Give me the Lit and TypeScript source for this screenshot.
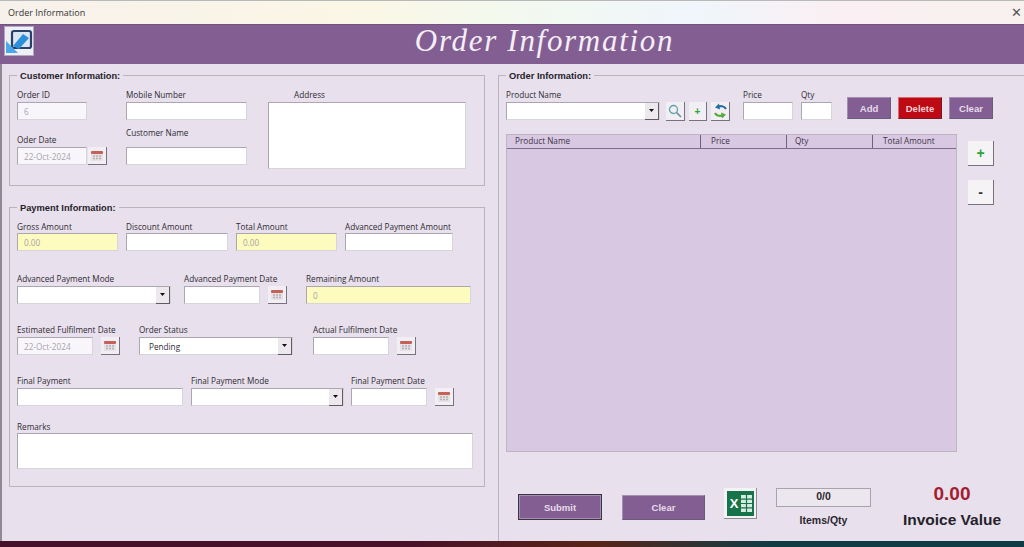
import { LitElement, html, css, svg } from 'lit';
import { customElement } from 'lit/decorators.js';

const calIcon = svg`<svg width="14" height="13" viewBox="0 0 14 13">
  <rect x="1" y="2" width="12" height="10" fill="#e6e1e4"/>
  <rect x="1" y="2" width="12" height="3" rx="1" fill="#c8605a"/>
  <path d="M3 7h2M6 7h2M9 7h2M3 9.500h2M6 9.500h2M9 9.500h2" stroke="#b4b0b3" stroke-width="1.300"/>
</svg>`;

const arrowIcon = svg`<svg width="5" height="3" viewBox="0 0 5 3"><path d="M0 0h5L2.500 3z" fill="#111"/></svg>`;

const searchIcon = svg`<svg width="14" height="14" viewBox="0 0 14 14" fill="none">
  <circle cx="5.500" cy="5.500" r="4" stroke="#5ea3ad" stroke-width="1.300"/>
  <path d="M8.600 8.600L13 13" stroke="#6f8f9a" stroke-width="1.600"/>
</svg>`;

const refreshIcon = svg`<svg width="15" height="16" viewBox="0 0 15 16" fill="none">
  <path d="M13 6C11.500 2.800 7 2.400 4.500 4.200" stroke="#2a6f9c" stroke-width="2.200"/>
  <path d="M6 0.500L2 4.500l5 2z" fill="#2a6f9c"/>
  <path d="M2 10c1.500 3.200 6 3.600 8.500 1.800" stroke="#5aa83c" stroke-width="2.200"/>
  <path d="M9 15.500l4-4-5-2z" fill="#5aa83c"/>
</svg>`;

const excelIcon = svg`<svg width="29" height="27" viewBox="0 0 29 27">
  <rect x="1" y="1" width="27" height="25" fill="#17744a"/>
  <rect x="15" y="5" width="11" height="17" fill="#d6ece0"/>
  <path d="M15 9.200h11M15 13.500h11M15 17.800h11M20.500 5v17" stroke="#17744a" stroke-width="1.200"/>
  <text x="8" y="18" text-anchor="middle" font-family="Liberation Sans" font-weight="700" font-size="13" fill="#fff">X</text>
</svg>`;

const logoIcon = svg`<svg width="28" height="26" viewBox="0 0 28 26" fill="none">
  <rect x="7" y="3" width="19" height="17" rx="2" fill="#d9e6f2" stroke="#2b3f6b" stroke-width="2.200"/>
  <path d="M8 18L18 6l6 4-10 11z" fill="#2c8fd9"/>
  <path d="M1 25V13l12 12z" fill="#4aa9ea"/>
</svg>`;

@customElement('app-root')
class AppRoot extends LitElement {
  static styles = css`
    :host {
      display: block;
      width: 1024px;
      height: 547px;
      overflow: hidden;
      font-family: "Open Sans", "Liberation Sans", sans-serif;
      font-size: 8.200px;
      color: #2f2b33;
    }
    .app {
      display: flex;
      flex-direction: column;
      height: 547px;
    }
    .titlebar {
      flex: 0 0 24px;
      box-sizing: border-box;
      display: flex;
      align-items: center;
      justify-content: space-between;
      padding: 0 2px 0 8px;
      font-size: 9px;
      color: #333;
      border-top: 1px solid #b9b9b9;
      background: linear-gradient(90deg, #f7f1ec 0%, #fbf7e6 35%, #f3f9ef 50%, #f0f6fb 68%, #faeff3 82%, #f8f1ee 100%);
    }
    .close { font-size: 13px; color: #555; line-height: 1; }
    .header {
      flex: 0 0 40px;
      box-sizing: border-box;
      position: relative;
      display: flex;
      justify-content: center;
      align-items: center;
      padding: 0 0 7px 65px;
      background: #835e93;
      border-top: 1px solid #74527f;
    }
    .title {
      font-family: "Liberation Serif", serif;
      font-style: italic;
      font-size: 31px;
      line-height: 32px;
      letter-spacing: 1.700px;
      color: #f4eff6;
    }
    .logo {
      position: absolute;
      left: 4px;
      top: 1px;
      width: 28px;
      height: 28px;
      display: flex;
      align-items: center;
      justify-content: center;
      background: #eef0f5;
      border: 1px solid #b3a7c0;
    }
    .body {
      flex: 1;
      min-height: 0;
      display: flex;
      overflow: hidden;
      background: #e8e0ec;
      border-left: 2px solid #8f8b94;
    }
    .strip {
      flex: 0 0 6px;
      background: linear-gradient(90deg, #45102a 0%, #4a1028 40%, #5a2418 58%, #123c44 75%, #0f3b46 100%);
    }
    .left {
      flex: 0 0 476px;
      margin-left: 7px;
      display: flex;
      flex-direction: column;
      gap: 15px;
      padding-top: 5px;
    }
    .right {
      flex: 0 0 535px;
      margin-left: 13px;
      padding-top: 5px;
    }
    fieldset {
      margin: 0;
      padding: 0 11px 0 7px;
      min-width: 0;
      border: 1px solid #b9b5bd;
    }
    legend {
      margin-left: 0;
      padding: 0 3px;
      height: 12px;
      font-family: "Liberation Sans", sans-serif;
      font-size: 9.300px;
      font-weight: 700;
      line-height: 14px;
      color: #26222a;
    }
    .field { display: flex; flex-direction: column; min-width: 0; }
    .field label {
      line-height: 12px;
      margin-bottom: 1px;
      white-space: nowrap;
    }
    .field.loose label { margin-bottom: 8px; }
    .field.addr label { padding-left: 26px; }
    .r1 label, .r5 label { line-height: 14px; margin-bottom: -1px; }
    .r2 label, .r3 label { line-height: 11px; margin-bottom: 2px; }
    .input {
      box-sizing: border-box;
      display: block;
      width: 100%;
      height: 18px;
      padding: 0 6px;
      font: inherit;
      color: #a8a4ac;
      background: #fff;
      border: 1px solid;
      border-color: #aaa7ae #d8d5da #d8d5da #aaa7ae;
      border-radius: 0;
      outline: none;
      resize: none;
    }
    .input.off { background: #f8f6fa; }
    .input.due { background: #fdfbbd; }
    .combo {
      box-sizing: border-box;
      display: flex;
      align-items: center;
      justify-content: space-between;
      height: 18px;
      padding-left: 9px;
      background: #fff;
      border: 1px solid;
      border-color: #aaa7ae #d8d5da #d8d5da #aaa7ae;
    }
    .combo i {
      width: 13px;
      height: 16px;
      display: flex;
      align-items: center;
      justify-content: center;
      background: #ece8ee;
      border-right: 1px solid #5f5b63;
      border-bottom: 1px solid #5f5b63;
    }
    .tool {
      box-sizing: border-box;
      display: flex;
      align-items: center;
      justify-content: center;
      padding: 0;
      background: #f2eff4;
      border: 0;
      border-right: 1px solid #77737c;
      border-bottom: 1px solid #77737c;
      color: #2ca53a;
      font: 700 10px "Liberation Sans", sans-serif;
    }
    .cal { width: 19px; height: 18px; }
    .with-cal { display: flex; gap: 8px; align-items: flex-end; }
    .with-cal .input { flex: 0 0 76px; width: 76px; }
    .cust {
      display: grid;
      grid-template-columns: 109px 142px 198px;
      padding: 8px 0 16px;
    }
    .stack { display: flex; flex-direction: column; }
    .gap14 { margin-top: 14px; }
    .gap7 { margin-top: 7px; }
    .w121 { width: 121px; }
    .order-id { width: 70px; }
    .with-cal.tight { gap: 1px; }
    .with-cal.tight .input { flex: 0 0 70px; width: 70px; }
    .address { height: 67px; }
    .pay { padding: 7px 0 17px; }
    .row { display: grid; justify-content: start; }
    .r1 { grid-template-columns: 101px 102px 101px 108px; column-gap: 8px; }
    .r2 { grid-template-columns: 154px 103px 171px; column-gap: 13px; margin-top: 22px; }
    .r2 > :nth-child(3) { margin-left: 6px; }
    .r3 { grid-template-columns: 103px 154px 105px; column-gap: 19px; margin-top: 20px; }
    .r3 > :nth-child(3) { padding-left: 2px; margin-left: -1px; }
    .r4 { grid-template-columns: 166px 153px 103px; column-gap: 8px; margin-top: 20px; }
    .r4 > :nth-child(3) { margin-left: -1px; }
    .r5 { margin-top: 14px; }
    .remarks { height: 36px; }
    .order { height: 480px; padding: 8px 0 0; }
    .top { display: flex; align-items: flex-start; }
    .product { width: 154px; }
    .tools { display: flex; gap: 4px; margin: 13px 13px 0 6px; }
    .tools .tool { height: 19px; }
    .btn {
      box-sizing: border-box;
      padding: 0;
      font: 700 9.500px "Liberation Sans", sans-serif;
      color: #e6dcea;
      background: #835e93;
      border: 1px solid;
      border-color: #a58fb0 #6d5a78 #6d5a78 #a58fb0;
    }
    .btn.small { width: 44px; height: 22px; margin: 8px 0 0 7px; }
    .btn.red { background: #bd0a14; color: #f0d0d4; border-color: #d86a70 #7a1a22 #7a1a22 #d86a70; }
    .btn.submit { width: 84px; height: 26px; margin-top: 6px; border: 1px solid #3d3443; box-shadow: inset 0 0 0 1px #a58fb0; }
    .btn.plain { width: 83px; height: 25px; margin: 7px 0 0 20px; }
    .mid { display: flex; margin-top: 13px; }
    .table {
      flex: 0 0 451px;
      box-sizing: border-box;
      height: 318px;
      background: #d8c8e2;
      border: 1px solid #bcb4c2;
    }
    .thead {
      display: grid;
      grid-template-columns: 194px 86px 86px 1fr;
      height: 13px;
      border-bottom: 1px solid #7f6c8c;
      color: #3e3346;
      line-height: 12px;
    }
    .thead span { padding-left: 10px; border-right: 1px solid #6e6475; }
    .thead span:first-child { padding-left: 8px; }
    .thead span:nth-child(3) { padding-left: 8px; }
    .thead span:last-child { border-right: 0; }
    .side { display: flex; flex-direction: column; gap: 14px; margin: 7px 0 0 11px; }
    .side .tool { width: 26px; height: 25px; font-size: 14px; background: #f6f3f7; }
    .side .minus { color: #333; }
    .bottom { display: flex; align-items: flex-start; margin: 36px 0 0 12px; }
    .excel {
      box-sizing: border-box;
      width: 33px;
      height: 31px;
      margin-left: 19px;
      display: flex;
      align-items: center;
      justify-content: center;
      background: #f4f2f5;
      border-right: 1px solid #8f8b94;
      border-bottom: 1px solid #8f8b94;
    }
    .stats { width: 95px; margin-left: 19px; text-align: center; font: 700 10.500px "Liberation Sans", sans-serif; color: #2b2730; }
    .count {
      box-sizing: border-box;
      height: 19px;
      line-height: 15px;
      background: #ece7ef;
      border: 1px solid #a8a4ac;
      margin-bottom: 7px;
    }
    .invoice { width: 110px; margin: -5px 0 0 26px; text-align: center; font-family: "Liberation Sans", sans-serif; font-weight: 700; }
    .amount { font-size: 19px; line-height: 22px; color: #a31d2e; }
    .invoice-label { margin-top: 6px; font-size: 15.500px; line-height: 18px; color: #25222a; }
  `;

  field(label: string, control: unknown, cls = '') {
    return html`<div class="field ${cls}"><label>${label}</label>${control}</div>`;
  }

  input(value = '', cls = '') {
    return html`<input class="input ${cls}" .value=${value} readonly />`;
  }

  combo(value = '') {
    return html`<div class="combo"><span>${value}</span><i>${arrowIcon}</i></div>`;
  }

  date(value = '', cls = '') {
    return html`<div class="with-cal ${cls}">
      ${this.input(value, value ? 'off' : '')}
      <button class="tool cal">${calIcon}</button>
    </div>`;
  }

  customer() {
    return html`<fieldset>
      <legend>Customer Information:</legend>
      <div class="cust">
        <div class="stack">
          ${this.field('Order ID', html`<div class="order-id">${this.input('6', 'off')}</div>`)}
          ${this.field('Oder Date', this.date('22-Oct-2024', 'tight'), 'gap14')}
        </div>
        <div class="stack">
          ${this.field('Mobile Number', this.input(), 'w121')}
          ${this.field('Customer Name', this.input(), 'w121 gap7 loose')}
        </div>
        ${this.field('Address', html`<textarea class="input address" readonly></textarea>`, 'addr')}
      </div>
    </fieldset>`;
  }

  payment() {
    return html`<fieldset>
      <legend>Payment Information:</legend>
      <div class="pay">
        <div class="row r1">
          ${this.field('Gross Amount', this.input('0.00', 'due'))}
          ${this.field('Discount Amount', this.input())}
          ${this.field('Total Amount', this.input('0.00', 'due'))}
          ${this.field('Advanced Payment Amount', this.input())}
        </div>
        <div class="row r2">
          ${this.field('Advanced Payment Mode', this.combo())}
          ${this.field('Advanced Payment Date', this.date())}
          ${this.field('Remaining Amount', this.input('0', 'due'))}
        </div>
        <div class="row r3">
          ${this.field('Estimated Fulfilment Date', this.date('22-Oct-2024'))}
          ${this.field('Order Status', this.combo('Pending'))}
          ${this.field('Actual Fulfilment Date', this.date())}
        </div>
        <div class="row r4">
          ${this.field('Final Payment', this.input())}
          ${this.field('Final Payment Mode', this.combo())}
          ${this.field('Final Payment Date', this.date())}
        </div>
        <div class="r5">
          ${this.field('Remarks', html`<textarea class="input remarks" readonly></textarea>`)}
        </div>
      </div>
    </fieldset>`;
  }

  order() {
    return html`<fieldset>
      <legend>Order Information:</legend>
      <div class="order">
        <div class="top">
          ${this.field('Product Name', this.combo(), 'product')}
          <div class="tools">
            <button class="tool" style="width:19px">${searchIcon}</button>
            <button class="tool" style="width:18px">+</button>
            <button class="tool" style="width:19px">${refreshIcon}</button>
          </div>
          ${this.field('Price', html`<div style="width:50px">${this.input()}</div>`)}
          <div style="width:8px"></div>
          ${this.field('Qty', html`<div style="width:31px">${this.input()}</div>`)}
          <div style="width:8px"></div>
          <button class="btn small">Add</button>
          <button class="btn small red">Delete</button>
          <button class="btn small">Clear</button>
        </div>
        <div class="mid">
          <div class="table">
            <div class="thead">
              <span>Product Name</span><span>Price</span><span>Qty</span><span>Total Amount</span>
            </div>
          </div>
          <div class="side">
            <button class="tool">+</button>
            <button class="tool minus">-</button>
          </div>
        </div>
        <div class="bottom">
          <button class="btn submit">Submit</button>
          <button class="btn plain">Clear</button>
          <div class="excel">${excelIcon}</div>
          <div class="stats">
            <div class="count">0/0</div>
            <div>Items/Qty</div>
          </div>
          <div class="invoice">
            <div class="amount">0.00</div>
            <div class="invoice-label">Invoice Value</div>
          </div>
        </div>
      </div>
    </fieldset>`;
  }

  render() {
    return html`<div class="app">
      <div class="titlebar"><span>Order Information</span><span class="close">✕</span></div>
      <div class="header">
        <div class="logo">${logoIcon}</div>
        <div class="title">Order Information</div>
      </div>
      <div class="body">
        <div class="left">${this.customer()}${this.payment()}</div>
        <div class="right">${this.order()}</div>
      </div>
      <div class="strip"></div>
    </div>`;
  }
}
